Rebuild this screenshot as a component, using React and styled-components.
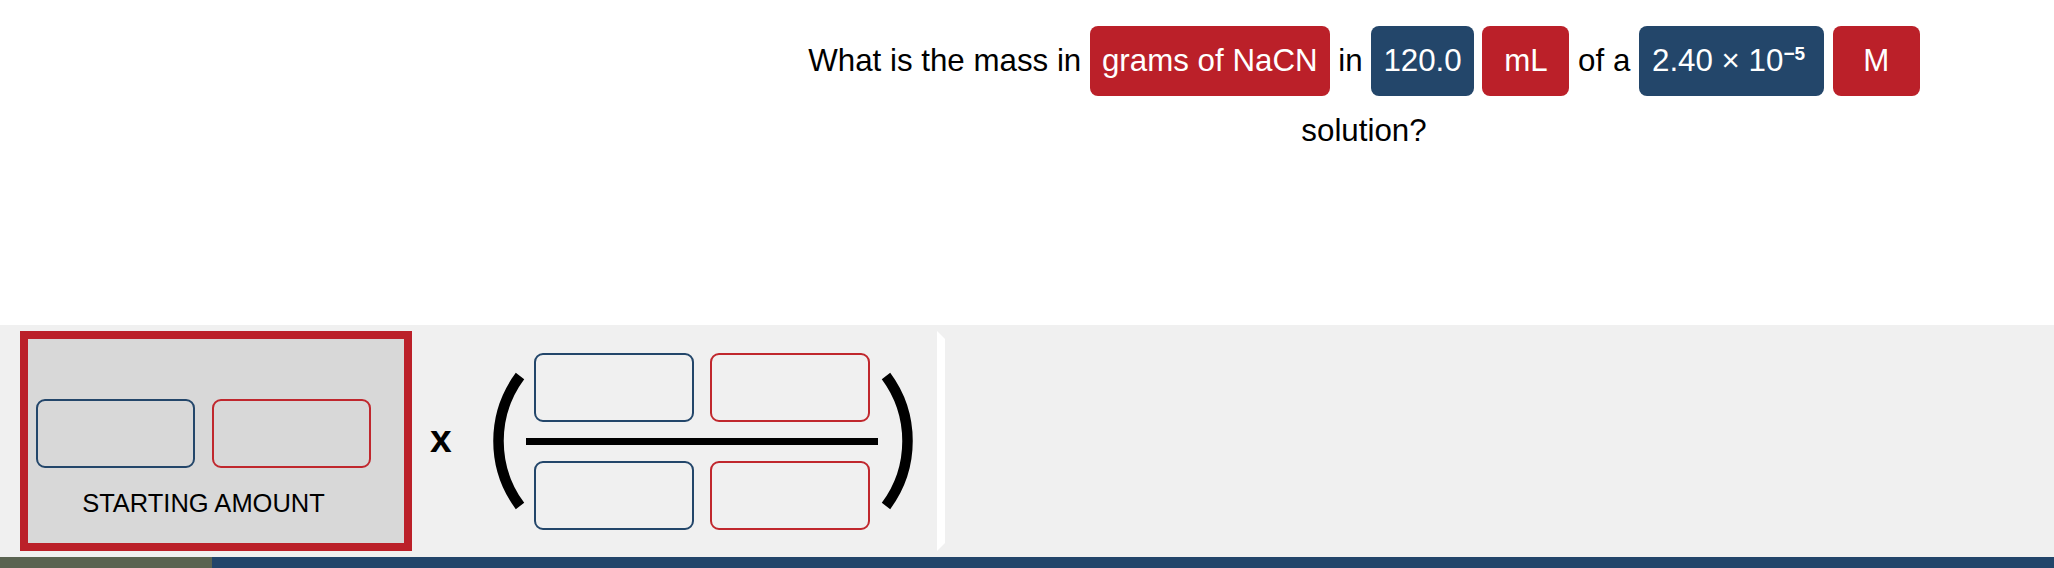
import styled, { createGlobalStyle } from "styled-components";

const GlobalStyle = createGlobalStyle`
    html, body {
        margin: 0;
        padding: 0;
        background: #ffffff;
        font-family: "Liberation Sans", Arial, sans-serif;
        overflow: hidden;
    }
`;

const Page = styled.div`
    width: 2054px;
    height: 568px;
    display: flex;
    flex-direction: column;
`;

const Header = styled.header`
    height: 325px;
    box-sizing: border-box;
    padding: 26px 100px 0 0;
    display: flex;
    justify-content: flex-end;
`;

const Question = styled.p`
    width: 1180px;
    margin: 0;
    text-align: center;
    font-size: 31.3px;
    line-height: 70px;
    color: #000000;
`;

const Chip = styled.span`
    display: inline-block;
    vertical-align: top;
    box-sizing: border-box;
    min-width: 87px;
    height: 70px;
    padding: 0 ${props => props.$wide ? "19px 0 13px" : "12px"};
    border-radius: 8px;
    background: ${props => props.$tone === "blue" ? "#23466a" : "#bb2029"};
    color: #ffffff;
    line-height: 70px;
    text-align: center;
`;

const Exponent = styled.sup`
    font-size: 19px;
    font-weight: 700;
    line-height: 0;
    vertical-align: 11px;
`;

const Workspace = styled.section`
    height: 232px;
    box-sizing: border-box;
    padding: 6px 20px;
    background: #f0f0f0;
    display: flex;
    align-items: center;
`;

const StartingBox = styled.div`
    width: 392px;
    height: 220px;
    box-sizing: border-box;
    border: 8px solid #bb2029;
    background: #d8d8d8;
    display: flex;
    flex-direction: column;
    justify-content: flex-end;
    padding: 0 0 25px 8px;
`;

const StartingInner = styled.div`
    width: 335px;
    display: flex;
    flex-direction: column;
    align-items: center;
    gap: 21px;
`;

const InputRow = styled.div`
    display: flex;
    gap: ${props => props.$gap || 16}px;
`;

const UnitInput = styled.div`
    width: ${props => props.$width || 160}px;
    height: 69px;
    box-sizing: border-box;
    border: 2px solid ${props => props.$tone === "blue" ? "#23466a" : "#c0272d"};
    border-radius: 9px;
`;

const Label = styled.span`
    font-size: 25.5px;
    color: #000000;
    line-height: 29px;
`;

const Times = styled.span`
    margin-left: 18px;
    font-size: 39px;
    font-weight: 700;
    line-height: 1;
    padding-bottom: 6px;
`;

const Factor = styled.div`
    margin-left: 41px;
    display: flex;
    align-items: center;
`;

const Fraction = styled.div`
    width: 352px;
    display: flex;
    flex-direction: column;
    align-items: center;
    gap: 16px;
`;

const FractionBar = styled.div`
    width: 100%;
    height: 7px;
    background: #000000;
`;

const Paren = styled.svg`
    width: 33px;
    height: 140px;
    flex-shrink: 0;
    margin-left: ${props => props.$right ? "2px" : "0"};
`;

const WorkPanel = styled.div`
    flex: 1;
    height: 220px;
    margin-left: 24px;
    box-sizing: border-box;
    border: 8px solid #f0f0f0;
    border-left-color: #ffffff;
    background: #f0f0f0;
`;

const ProgressBar = styled.div`
    height: 11px;
    display: flex;
    background: #22456a;
`;

const ProgressDone = styled.div`
    width: 212px;
    background: #5a6351;
`;

function LeftParen() {
    return (
        <Paren viewBox="0 0 33 140">
            <path d="M27 5 A109 109 0 0 0 27 135" fill="none" stroke="#000" strokeWidth="10.5" />
        </Paren>
    );
}

function RightParen() {
    return (
        <Paren viewBox="0 0 33 140" $right>
            <path d="M6 5 A109 109 0 0 1 6 135" fill="none" stroke="#000" strokeWidth="10.5" />
        </Paren>
    );
}

function App() {
    return (
        <Page>
            <GlobalStyle />
            <Header>
                <Question>
                    What is the mass in <Chip $tone="red">grams of NaCN</Chip> in{" "}
                    <Chip $tone="blue">120.0</Chip> <Chip $tone="red">mL</Chip> of a{" "}
                    <Chip $tone="blue" $wide>2.40 × 10<Exponent>−5</Exponent></Chip>{" "}
                    <Chip $tone="red">M</Chip> solution?
                </Question>
            </Header>
            <Workspace>
                <StartingBox>
                    <StartingInner>
                        <InputRow $gap={17}>
                            <UnitInput $tone="blue" $width={159} />
                            <UnitInput $tone="red" $width={159} />
                        </InputRow>
                        <Label>STARTING AMOUNT</Label>
                    </StartingInner>
                </StartingBox>
                <Times>x</Times>
                <Factor>
                    <LeftParen />
                    <Fraction>
                        <InputRow>
                            <UnitInput $tone="blue" />
                            <UnitInput $tone="red" />
                        </InputRow>
                        <FractionBar />
                        <InputRow>
                            <UnitInput $tone="blue" />
                            <UnitInput $tone="red" />
                        </InputRow>
                    </Fraction>
                    <RightParen />
                </Factor>
                <WorkPanel />
            </Workspace>
            <ProgressBar>
                <ProgressDone />
            </ProgressBar>
        </Page>
    );
}

export default App;
